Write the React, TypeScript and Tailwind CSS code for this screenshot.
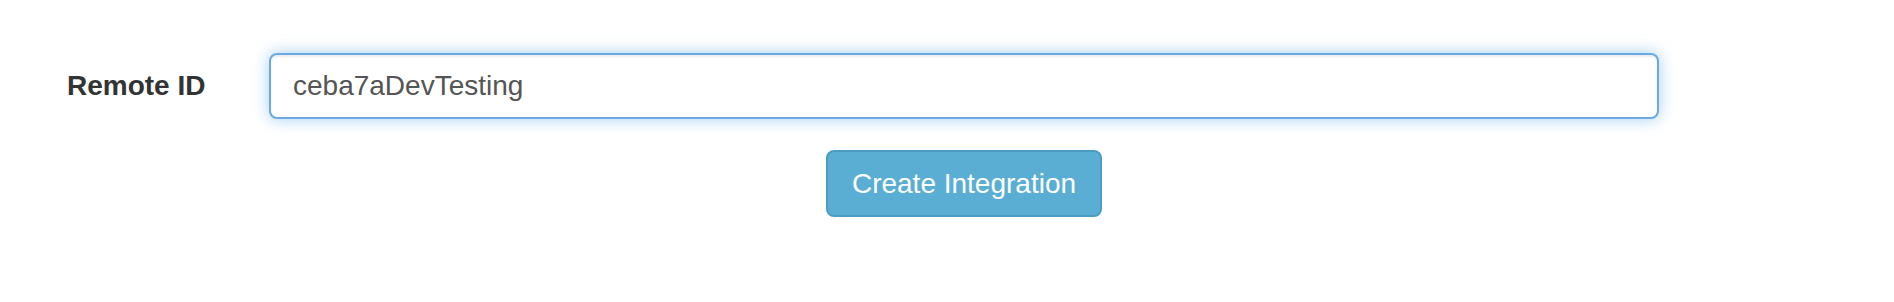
// App.tsx
const FONT = { fontFamily: '"Liberation Sans", Helvetica, Arial, sans-serif' };

export default function App() {
  return (
    <div className="min-h-[302px] w-full bg-white pt-[53px] text-[#333]" style={FONT}>
      {/* Remote ID row */}
      <div className="flex items-center pl-[67px]">
        <label
          htmlFor="remote-id"
          className="w-[202px] shrink-0 text-[28px] leading-[40px] font-bold"
        >
          Remote ID
        </label>
        <input
          id="remote-id"
          type="text"
          defaultValue="ceba7aDevTesting"
          className="h-[66px] w-[1390px] rounded-[8px] border-2 border-[#6aa9e3] bg-white px-[22px] text-[28px] leading-[40px] text-[#555] outline-none shadow-[inset_0_2px_2px_rgba(0,0,0,0.075),0_0_16px_rgba(102,175,233,0.6)]"
        />
      </div>

      {/* Submit */}
      <div className="mt-[31px] flex pl-[269px]">
        <div className="flex w-[1390px] justify-center">
          <button
            type="button"
            className="h-[67px] rounded-[8px] border-2 border-[#4a9cc2] bg-[#5aaed3] px-6 text-[28px] leading-[40px] text-white"
          >
            Create Integration
          </button>
        </div>
      </div>
    </div>
  );
}
